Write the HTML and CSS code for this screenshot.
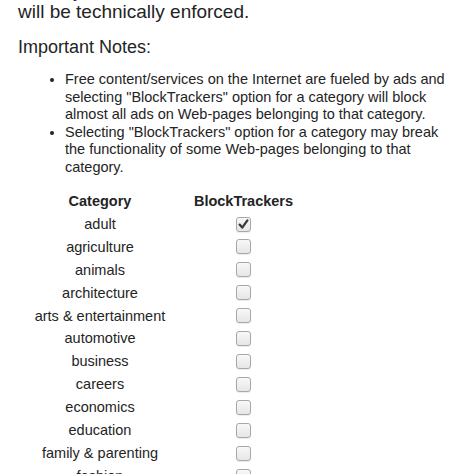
FILE: index.html
```html
<!DOCTYPE html>
<html>
<head>
<meta charset="utf-8">
<link rel="stylesheet" href="styles.css">
</head>
<body>
<div class="page">
  <p class="intro">So, any choice made in the table below for each site<br>will be technically enforced.</p>
  <h3 class="notes-title">Important Notes:</h3>
  <ul class="notes">
    <li>Free content/services on the Internet are fueled by ads and selecting "BlockTrackers" option for a category will block almost all ads on Web-pages belonging to that category.</li>
    <li>Selecting "BlockTrackers" option for a category may break the functionality of some Web-pages belonging to that category.</li>
  </ul>
  <table class="cats">
    <thead>
      <tr><th class="c1">Category</th><th class="c2">BlockTrackers</th></tr>
    </thead>
    <tbody>
      <tr><td>adult</td><td><span class="box checked"><svg viewBox="0 0 15 15" width="15" height="15"><path d="M3.6 7.6 L6.2 10.6 L11.4 3.4" fill="none" stroke="#3a3a3a" stroke-width="2.3" stroke-linecap="round" stroke-linejoin="round"/></svg></span></td></tr>
      <tr><td>agriculture</td><td><span class="box"></span></td></tr>
      <tr><td>animals</td><td><span class="box"></span></td></tr>
      <tr><td>architecture</td><td><span class="box"></span></td></tr>
      <tr><td>arts &amp; entertainment</td><td><span class="box"></span></td></tr>
      <tr><td>automotive</td><td><span class="box"></span></td></tr>
      <tr><td>business</td><td><span class="box"></span></td></tr>
      <tr><td>careers</td><td><span class="box"></span></td></tr>
      <tr><td>economics</td><td><span class="box"></span></td></tr>
      <tr><td>education</td><td><span class="box"></span></td></tr>
      <tr><td>family &amp; parenting</td><td><span class="box"></span></td></tr>
      <tr><td>fashion</td><td><span class="box"></span></td></tr>
      <tr><td>food &amp; drink</td><td><span class="box"></span></td></tr>
    </tbody>
  </table>
</div>
</body>
</html>
```

FILE: styles.css
```css
html, body {
  margin: 0;
  padding: 0;
  background: #ffffff;
}
body {
  font-family: "Liberation Sans", Arial, Helvetica, sans-serif;
  color: #242424;
  overflow: hidden;
}
.page {
  padding: 0 18px;
}
.intro {
  font-size: 19px;
  line-height: 21px;
  margin: -20px 0 0 0;
  white-space: nowrap;
}
.notes-title {
  font-size: 18px;
  line-height: 21px;
  font-weight: normal;
  margin: 15px 0 0 0;
}
.notes {
  font-size: 14.5px;
  line-height: 17.5px;
  margin: 13px 0 0 0;
  padding-left: 47px;
}
.cats {
  border-collapse: collapse;
  margin: 14px 0 0 2px;
  font-size: 14.5px;
}
.cats th, .cats td {
  padding: 0;
  line-height: 22.9px;
  height: 22.9px;
  text-align: center;
  vertical-align: middle;
}
.cats th {
  font-weight: bold;
}
.c1 {
  width: 160px;
}
.c2 {
  width: 127px;
}
.box {
  display: inline-block;
  width: 13px;
  height: 13px;
  border: 1px solid #a8a8a8;
  border-radius: 3px;
  background: linear-gradient(#f8f8f8, #e6e6e6);
  box-shadow: 0 1px 1px rgba(0,0,0,0.08);
  vertical-align: middle;
  position: relative;
  top: -1px;
}
.box svg {
  display: block;
  margin: -1px;
}
```
